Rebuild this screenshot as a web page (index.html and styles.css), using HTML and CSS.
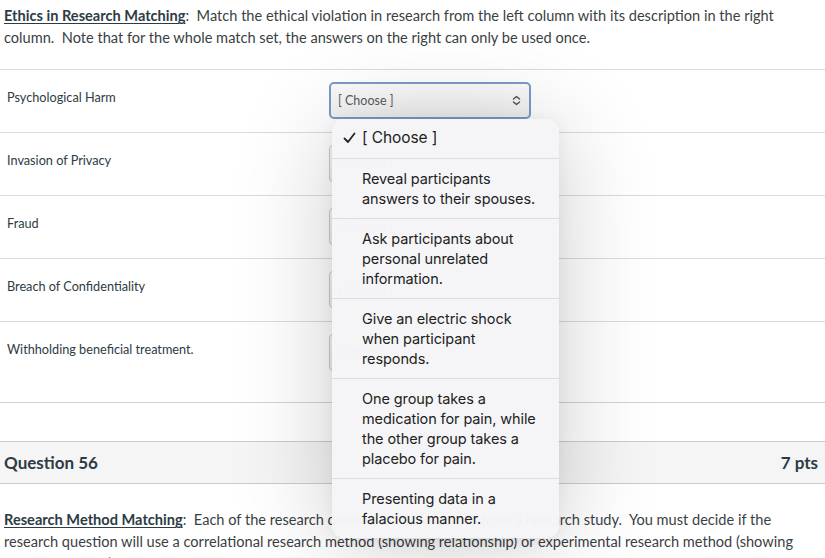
FILE: index.html
```html
<!DOCTYPE html>
<html>
<head>
<meta charset="utf-8">
<link rel="stylesheet" href="styles.css">
</head>
<body>
<div class="page">
  <p class="intro"><span class="lead">Ethics in Research Matching</span>:&nbsp; Match the ethical violation in research from the left column with its description in the right column.&nbsp; Note that for the whole match set, the answers on the right can only be used once.</p>

  <div class="matches">
    <div class="row">
      <div class="label">Psychological Harm</div>
      <div class="select focused"><span>[ Choose ]</span>
        <svg class="chev" width="9" height="11" viewBox="0 0 9 11"><path d="M1.5 4 L4.5 1.5 L7.5 4 M1.5 7 L4.5 9.5 L7.5 7" fill="none" stroke="#555" stroke-width="1.5" stroke-linecap="round" stroke-linejoin="round"/></svg>
      </div>
    </div>
    <div class="row">
      <div class="label">Invasion of Privacy</div>
      <div class="select"><span>[ Choose ]</span></div>
    </div>
    <div class="row">
      <div class="label">Fraud</div>
      <div class="select"><span>[ Choose ]</span></div>
    </div>
    <div class="row">
      <div class="label">Breach of Confidentiality</div>
      <div class="select"><span>[ Choose ]</span></div>
    </div>
    <div class="row last">
      <div class="label">Withholding beneficial treatment.</div>
      <div class="select"><span>[ Choose ]</span></div>
    </div>
  </div>

  <div class="qheader">
    <div class="qtitle">Question 56</div>
    <div class="qpts">7 pts</div>
  </div>

  <p class="intro second"><span class="lead">Research Method Matching</span>:&nbsp; Each of the research questions below comes from a research study.&nbsp; You must decide if the research question will use a correlational research method (showing relationship) or experimental research method (showing cause and effect).</p>

  <div class="menu">
    <div class="item selected">
      <svg class="check" width="13" height="12" viewBox="0 0 13 12"><path d="M1.5 6.5 L5 10 L11.5 1.5" fill="none" stroke="#222" stroke-width="1.8" stroke-linecap="round" stroke-linejoin="round"/></svg>
      <span>[ Choose ]</span>
    </div>
    <div class="item">Reveal participants<br>answers to their spouses.</div>
    <div class="item">Ask participants about<br>personal unrelated<br>information.</div>
    <div class="item">Give an electric shock<br>when participant<br>responds.</div>
    <div class="item">One group takes a<br>medication for pain, while<br>the other group takes a<br>placebo for pain.</div>
    <div class="item">Presenting data in a<br>falacious manner.</div>
  </div>
</div>
</body>
</html>
```
FILE: styles.css
```css
html, body {
  margin: 0;
  padding: 0;
  background: #ffffff;
}
body {
  font-family: Lato, "Noto Sans", sans-serif;
  color: #2d3b45;
  width: 825px;
  height: 558px;
  overflow: hidden;
}
.page {
  position: relative;
  padding: 0 7px 0 4px;
}
.intro {
  margin: 0;
  padding-top: 5px;
  font-size: 14.6px;
  line-height: 22px;
  color: #3a3f44;
}
.lead {
  font-weight: 700;
  text-decoration: underline;
  text-underline-offset: 2px;
  text-decoration-thickness: 1px;
  color: #2d3b45;
}
.matches {
  margin-top: 20px;
  margin-left: -4px;
  margin-right: -7px;
  border-top: 1px solid #d8dcdf;
  border-bottom: 1px solid #d0d4d7;
}
.row {
  display: flex;
  align-items: flex-start;
  height: 62px;
  border-bottom: 1px solid #d8dcdf;
}
.row.last {
  height: 80px;
  border-bottom: none;
}
.label {
  width: 329px;
  padding: 19px 0 0 7px;
  box-sizing: border-box;
  font-size: 12.7px;
  line-height: 16px;
  color: #2d3b45;
}
.select {
  margin-top: 12px;
  width: 202px;
  height: 37px;
  box-sizing: border-box;
  border: 1px solid #c7cdd1;
  border-radius: 4px;
  background: linear-gradient(#fbfbfb, #f1f1f2);
  display: flex;
  align-items: center;
  justify-content: space-between;
  padding: 0 8px 0 8px;
  font-size: 12.5px;
  color: #555c61;
}
.select.focused {
  border: 2px solid #7b9acb;
  padding-left: 7px;
  border-radius: 5px;
}
.qheader {
  margin: 38px -7px 0 -4px;
  height: 41px;
  border-top: 1px solid #c7cdd1;
  border-bottom: 1px solid #c7cdd1;
  background: #f5f5f5;
  display: flex;
  align-items: center;
  justify-content: space-between;
  padding: 0 7px 0 4px;
  font-size: 17px;
  font-weight: 700;
  color: #2d3b45;
}
.second {
  padding-top: 25px;
}
.menu {
  position: absolute;
  left: 332px;
  top: 119px;
  width: 227px;
  background: rgba(245, 245, 247, 0.98);
  border-radius: 13px;
  box-shadow: 0 8px 100px rgba(0, 0, 0, 0.2), 0 2px 16px rgba(0, 0, 0, 0.06);
  font-family: Inter, "Noto Sans", sans-serif;
  font-size: 14.5px;
  line-height: 20px;
  color: #222222;
  letter-spacing: -0.1px;
}
.item {
  padding: 10px 10px 9px 30px;
  border-bottom: 1px solid #dcdcde;
}
.item:last-child {
  border-bottom: none;
}
.item.selected {
  padding: 9px 10px 10px 11px;
  display: flex;
  align-items: center;
  gap: 6px;
  font-size: 15.5px;
}
.check {
  flex: none;
}
```
